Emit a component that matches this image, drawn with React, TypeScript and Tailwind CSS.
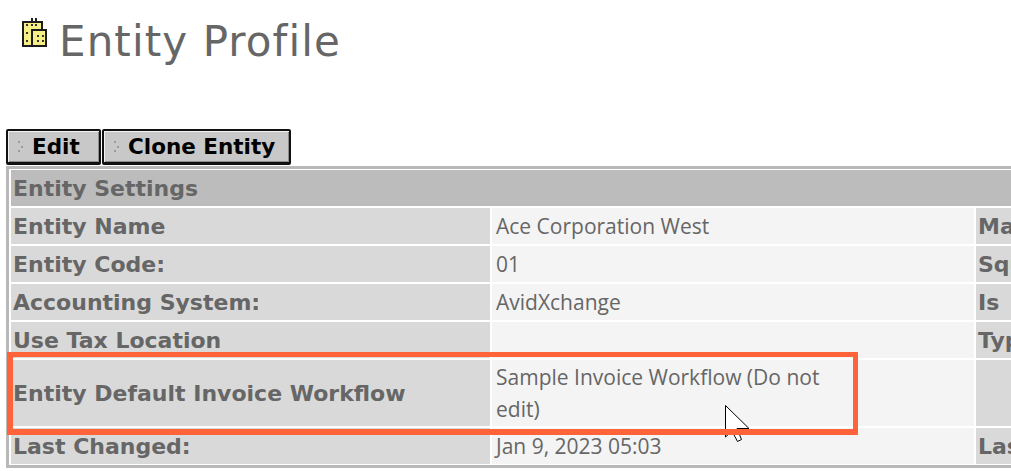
const verdana = "font-['DejaVu_Sans',Verdana,sans-serif]";

const rows = [
  { label: 'Entity Name', value: 'Ace Corporation West', right: 'Manager', h: 'h-[36px]' },
  { label: 'Entity Code:', value: '01', right: 'Square Feet', h: 'h-[36px]' },
  { label: 'Accounting System:', value: 'AvidXchange', right: 'Is', h: 'h-[36px]' },
  { label: 'Use Tax Location', value: '', right: 'Type', h: 'h-[36px]' },
  { label: 'Entity Default Invoice Workflow', value: 'Sample Invoice Workflow (Do not edit)', right: '', h: 'h-[66px]' },
  { label: 'Last Changed:', value: 'Jan 9, 2023 05:03', right: 'Last Changed By', h: 'h-[36px]' },
];

const BuildingIcon = () => (
  <svg width="28" height="31" viewBox="0 0 28 31" className="mt-[3px] shrink-0">
    <rect x="11" y="1" width="2" height="4" fill="#222" />
    <rect x="15" y="1" width="2" height="4" fill="#222" />
    <rect x="3" y="5" width="19" height="24" fill="#f5ef86" stroke="#1c1c1c" strokeWidth="2" />
    <rect x="12" y="13" width="14" height="16" fill="#f5ef86" stroke="#1c1c1c" strokeWidth="2" />
    <g fill="#333">
      <rect x="6" y="7" width="2" height="2" />
      <rect x="11" y="7" width="2" height="2" />
      <rect x="15" y="7" width="2" height="2" />
      <rect x="6" y="15" width="2" height="2" />
      <rect x="6" y="23" width="2" height="2" />
      <rect x="17" y="18" width="2" height="2" />
      <rect x="22" y="18" width="2" height="2" />
      <rect x="17" y="23" width="2" height="2" />
      <rect x="22" y="23" width="2" height="2" />
    </g>
  </svg>
);

const ToolButton = ({ text, className }: { text: string; className: string }) => (
  <button className={`flex h-[36px] items-center rounded-[2px] border-2 border-b-[3px] border-[#111] bg-[#c8c8c8] pl-[10px] shadow-[inset_1px_1px_0_#f0f0f0,inset_-1px_-1px_0_#8c8c8c] ${className}`}>
    <svg width="6" height="12" viewBox="0 0 6 12" className="mr-[8px] shrink-0">
      <g fill="#9a9a9a">
        <rect x="0" y="0" width="2" height="2" />
        <rect x="3" y="5" width="2" height="2" />
        <rect x="0" y="9" width="2" height="2" />
      </g>
    </svg>
    <span className={`${verdana} text-[21.5px] leading-none font-bold text-black`}>{text}</span>
  </button>
);

const App = () => {
  return (
    <div className="relative h-[471px] w-[1011px] overflow-hidden bg-white">
      <div className="flex h-[129px] items-start pl-[20px] pt-[14px]">
        <BuildingIcon />
        <h1 className={`${verdana} ml-[11px] mt-[3px] text-[42px] leading-[50px] font-normal tracking-[1.1px] text-[#666666]`}>Entity Profile</h1>
      </div>

      <div className="ml-[6px] flex gap-[1px]">
        <ToolButton text="Edit" className="w-[95px]" />
        <ToolButton text="Clone Entity" className="w-[189px]" />
      </div>

      <div className="ml-[6px] mt-[1px] w-[1200px] border-[3px] border-[#b9b9b9] bg-white px-[2px] py-[1px]">
        <div className={`${verdana} flex h-[36px] items-center bg-[#bcbcbc] pl-[2px] text-[22px] font-bold text-[#666666]`}>
          Entity Settings
        </div>
        {rows.map((row) => (
          <div key={row.label} className={`mt-[2px] grid grid-cols-[479px_482px_1fr] gap-x-[2px] ${row.h}`}>
            <div className={`${verdana} flex items-center whitespace-nowrap bg-[#d9d9d9] pl-[2px] text-[22px] font-bold text-[#666666]`}>
              {row.label}
            </div>
            <div className="flex items-center bg-[#f4f4f4] pl-[4px] pr-[110px] font-['Open_Sans',sans-serif] text-[21px] leading-[32px] text-[#666666]">
              {row.value}
            </div>
            <div className={`${verdana} flex items-center whitespace-nowrap bg-[#d9d9d9] pl-[2px] text-[22px] font-bold text-[#666666]`}>
              {row.right}
            </div>
          </div>
        ))}
      </div>

      {/* mouse pointer, the annotation box sits on top of it */}
      <svg width="28" height="40" viewBox="0 0 28 40" className="absolute left-[724px] top-[404px]">
        <path d="M1.500 1.500 V33 L8 27 L13.500 37.500 L17.500 35.500 L13 24.500 H25 Z" fill="white" stroke="black" strokeWidth="1" />
      </svg>

      {/* annotation box drawn over the table */}
      <div className="absolute left-[7px] top-[352px] h-[83px] w-[851px] border-[6px] border-t-[5px] border-r-[5px] border-[#ff6339]" />
    </div>
  );
};

export default App;
